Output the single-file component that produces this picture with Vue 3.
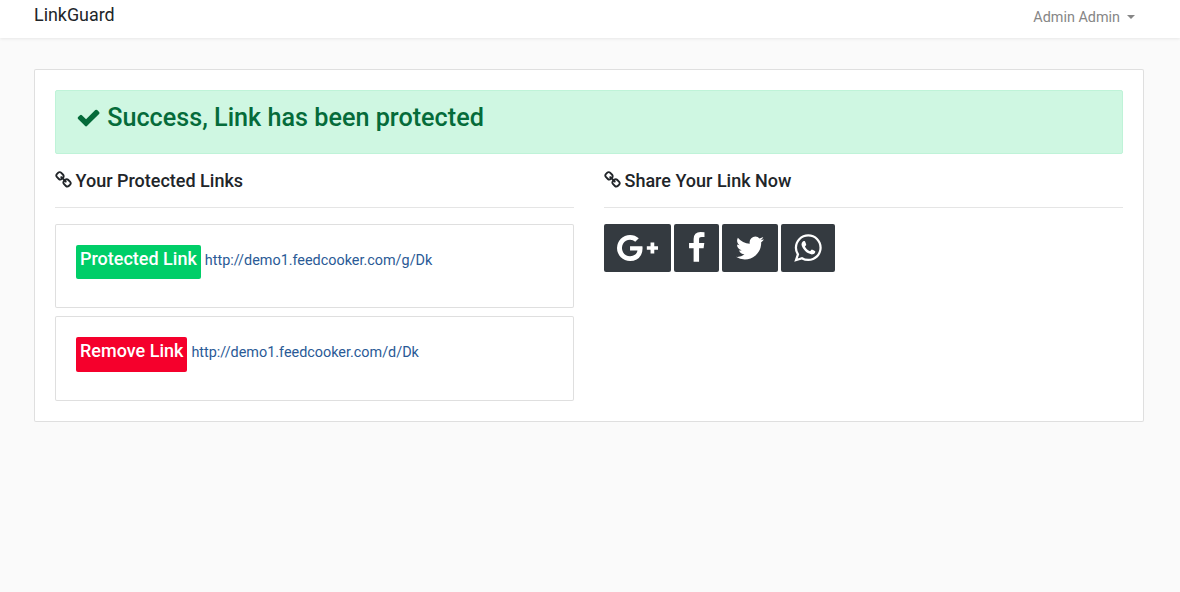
<script setup>
const links = [
  { label: 'Protected Link', kind: 'protected', url: 'http://demo1.feedcooker.com/g/Dk' },
  { label: 'Remove Link', kind: 'remove', url: 'http://demo1.feedcooker.com/d/Dk' },
]

const linkIcon = 'M1520 1216q0-40-28-68l-208-208q-28-28-68-28-42 0-72 32 3 3 19 18.500t21.500 21.500 15 19 13 25.500 3.500 27.500q0 40-28 68t-68 28q-15 0-27.500-3.500t-25.500-13-19-15-21.500-21.500-18.500-19q-33 31-33 73 0 40 28 68l206 207q27 27 68 27 40 0 68-26l147-146q28-28 28-67zm-703-705q0-40-28-68l-206-207q-28-28-68-28-39 0-68 27l-147 146q-28 28-28 67 0 40 28 68l208 208q27 27 68 27 42 0 72-31-3-3-19-18.500t-21.500-21.500-15-19-13-25.500-3.500-27.500q0-40 28-68t68-28q15 0 27.500 3.500t25.500 13 19 15 21.500 21.500 18.500 19q33-31 33-73zm895 705q0 120-85 203l-147 146q-83 83-203 83-121 0-204-85l-206-207q-83-83-83-203 0-123 88-209l-88-88q-86 88-208 88-120 0-204-84l-208-208q-84-84-84-204t85-203l147-146q83-83 203-83 121 0 204 85l206 207q83 83 83 203 0 123-88 209l88 88q86-88 208-88 120 0 204 84l208 208q84 84 84 204z'

const shareIcons = [
  { name: 'google-plus', width: 41, viewBox: '0 0 2304 1792', d: 'M1437 913q0 208-87 370.500t-248 254-369 91.500q-149 0-285-58t-234-156-156-234-58-285 58-285 156-234 234-156 285-58q286 0 491 192l-199 191q-117-113-292-113-123 0-227.500 62t-165.500 168.500-61 232.500 61 232.500 165.500 168.500 227.500 62q83 0 152.500-23t114.500-57.500 78.500-78.500 49-83 21.500-74h-416v-252h692q12 63 12 122zm867-122v210h-209v209h-210v-209h-209v-210h209v-209h210v209h209z' },
  { name: 'facebook', width: 19, viewBox: '384 0 1024 1792', d: 'M1343 12v264h-157q-86 0-116 36t-30 108v189h293l-39 296h-254v759h-306v-759h-255v-296h255v-218q0-186 104-288.500t277-102.500q147 0 228 12z' },
  { name: 'twitter', width: 30, viewBox: '64 0 1664 1792', d: 'M1684 408q-67 98-162 167 1 14 1 42 0 130-38 259.500t-115.500 248.500-184.500 210.500-258 146-323 54.500q-271 0-496-145 35 4 76 4 225 0 401-138-105-2-188-64.500t-114-159.500q33 5 61 5 43 0 85-11-112-23-185.500-111.500t-73.500-205.500v-4q68 38 146 41-66-44-105-115t-39-154q0-88 44-163 121 149 294.500 238.500t371.500 99.500q-8-38-8-74 0-134 94.500-228.500t228.500-94.500q140 0 236 102 109-21 205-78-37 115-142 178 91-10 186-51z' },
  { name: 'whatsapp', width: 28, viewBox: '128 0 1536 1792', d: 'M1113 974q13 0 97.500 44t89.500 53q2 5 2 15 0 33-17 76-16 39-71 65.500t-102 26.500q-57 0-190-62-98-45-170-118t-148-185q-72-107-71-194v-8q3-91 74-158 24-22 52-22 6 0 18 1.500t19 1.500q19 0 26.500 6.500t15.500 27.500q8 20 33 88t25 75q0 21-34.500 57.500t-34.500 46.500q0 7 5 15 34 73 102 137 56 53 151 101 12 7 22 7 15 0 54-48.500t52-48.500zm-203 530q127 0 243.500-50t200.500-134 134-200.500 50-243.500-50-243.500-134-200.500-200.500-134-243.500-50-243.500 50-200.500 134-134 200.500-50 243.500q0 203 120 368l-79 233 242-77q158 104 345 104zm0-1382q153 0 292.500 60t240.500 161 161 240.500 60 292.500-60 292.500-161 240.500-240.500 161-292.500 60q-195 0-365-94l-417 134 136-405q-108-178-108-389 0-153 60-292.500t161-240.500 240.500-161 292.500-60z' },
]
</script>

<template>
  <div class="page">
    <nav class="navbar">
      <a class="brand" href="#">LinkGuard</a>
      <a class="user" href="#">Admin Admin<span class="caret"></span></a>
    </nav>

    <main class="content">
      <section class="panel">
        <div class="alert">
          <svg class="check" viewBox="0 0 1792 1792" fill="currentColor">
            <path d="M1671 566q0 40-28 68l-724 724-136 136q-28 28-68 28t-68-28l-136-136-362-362q-28-28-28-68t28-68l136-136q28-28 68-28t68 28l294 295 656-657q28-28 68-28t68 28l136 136q28 28 28 68z" />
          </svg>
          <h3>Success, Link has been protected</h3>
        </div>

        <div class="columns">
          <div>
            <h5 class="section-title">
              <svg viewBox="64 0 1664 1792" fill="currentColor"><path :d="linkIcon" /></svg>
              Your Protected Links
            </h5>
            <hr />
            <div v-for="link in links" :key="link.url" class="link-card">
              <span class="badge" :class="link.kind">{{ link.label }}</span>
              <a class="url" :href="link.url">{{ link.url }}</a>
            </div>
          </div>

          <div>
            <h5 class="section-title">
              <svg viewBox="64 0 1664 1792" fill="currentColor"><path :d="linkIcon" /></svg>
              Share Your Link Now
            </h5>
            <hr />
            <div class="share-row">
              <a v-for="icon in shareIcons" :key="icon.name" class="share-btn" href="#">
                <svg :viewBox="icon.viewBox" :width="icon.width" height="32" fill="currentColor">
                  <path :d="icon.d" />
                </svg>
              </a>
            </div>
          </div>
        </div>
      </section>
    </main>
  </div>
</template>

<style>
body {
  background: #fafafa;
}
</style>

<style scoped>
.page {
  font-family: Roboto, 'Liberation Sans', sans-serif;
  font-size: 14.4px;
  color: #212529;
}

a {
  text-decoration: none;
}

.navbar {
  display: flex;
  justify-content: space-between;
  height: 38px;
  padding: 0 45px 0 34px;
  background: #fff;
  box-shadow: 0 1px 3px rgba(0, 0, 0, 0.08);
}

.brand {
  font-size: 17.9px;
  line-height: 30px;
  color: #212529;
}

.user {
  display: flex;
  align-items: center;
  height: 34px;
  color: #868686;
}

.caret {
  width: 0;
  height: 0;
  margin-left: 7px;
  border-top: 4px solid #868686;
  border-left: 4px solid transparent;
  border-right: 4px solid transparent;
}

.content {
  padding: 31px 36px 0 34px;
}

.panel {
  padding: 20px;
  background: #fff;
  border: 1px solid rgba(0, 0, 0, 0.125);
  border-radius: 2px;
}

.alert {
  display: flex;
  align-items: center;
  gap: 6px;
  height: 64px;
  box-sizing: border-box;
  padding: 0 20px;
  background: #cff7e2;
  border: 1px solid #bff3d8;
  border-radius: 2px;
  color: #056b3a;
}

.check {
  width: 25.2px;
  height: 25.2px;
  margin-bottom: 8px;
}

h3 {
  margin: 0 0 8px;
  font-size: 25.2px;
  font-weight: 500;
  line-height: 1.2;
}

.columns {
  display: grid;
  grid-template-columns: 1fr 1fr;
  gap: 30px;
  margin-top: 16px;
}

.section-title {
  display: flex;
  align-items: center;
  gap: 4px;
  margin: 0;
  height: 20px;
  font-size: 18px;
  font-weight: 500;
}

.section-title svg {
  width: 17px;
  height: 18px;
  margin-left: -0.5px;
}

hr {
  margin: 17px 0 16px;
  border: 0;
  border-top: 1px solid rgba(0, 0, 0, 0.1);
}

.link-card {
  height: 84px;
  box-sizing: border-box;
  margin-bottom: 8px;
  padding: 20px;
  background: #fff;
  border: 1px solid rgba(0, 0, 0, 0.125);
  border-radius: 2px;
}

.link-card:last-child {
  height: 85px;
  margin-bottom: 0;
}

.badge {
  display: inline-block;
  padding: 2px 4px 8px;
  margin-right: 4px;
  font-size: 18px;
  font-weight: 500;
  line-height: 24px;
  color: #fff;
  border-radius: 2px;
}

.protected {
  background: #00ce68;
}

.remove {
  padding-bottom: 9px;
  background: #f5002c;
}

.url {
  color: #2a5a96;
}

.share-row {
  display: flex;
  gap: 3px;
}

.share-btn {
  display: flex;
  align-items: center;
  justify-content: center;
  height: 48px;
  padding: 0 13px;
  background: #343a40;
  color: #fff;
  border-radius: 2px;
}
</style>
